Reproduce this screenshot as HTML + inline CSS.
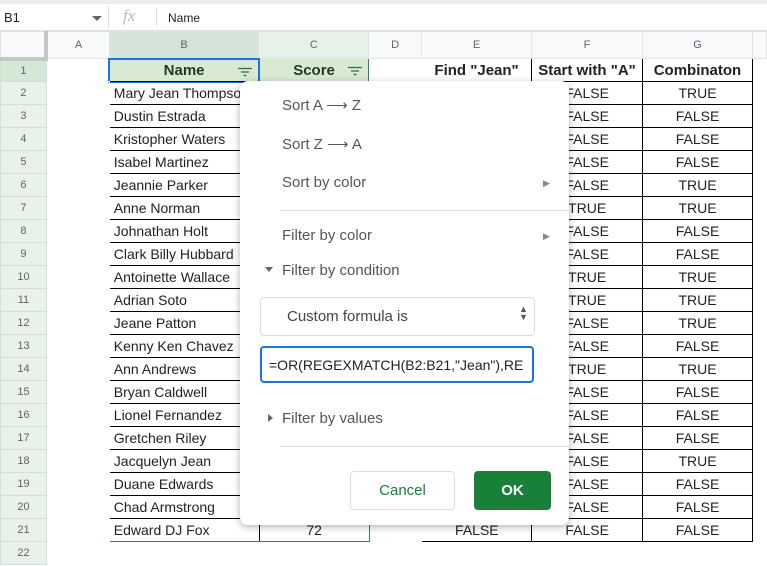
<!DOCTYPE html>
<html><head><meta charset="utf-8">
<style>
*{box-sizing:border-box;margin:0;padding:0}
body{width:767px;height:566px;overflow:hidden;background:#fff;font-family:"Liberation Sans",Arial,sans-serif;position:relative}
.top{position:absolute;left:0;top:0;width:767px;height:31px;background:#fff;border-top:4px solid #eee;border-bottom:1px solid #e0e0e0}
table{position:absolute;left:0;top:31px;border-collapse:collapse;table-layout:fixed}
td{height:23px;padding:0 4px;font-size:14px;color:#222;border:1px solid #e2e3e3;white-space:nowrap;overflow:hidden}
tr.h td{height:27px;background:#f8f9fa;color:#5f6368;text-align:center;font-size:11px}
td.rh{background:#e8f2ea;color:#5f6368;text-align:center;font-size:11px;border-color:#d6dcd7}
td.a{border-color:#fff}
.d{border:1px solid #000}
.c{text-align:center}
.b{font-weight:bold;text-align:center;font-size:15px}
.fi{position:absolute;right:5px;top:7px}
.menu{position:absolute;left:240px;top:81px;width:329px;height:444px;background:#fff;border-radius:8px;box-shadow:0 2px 8px rgba(0,0,0,.3);font-size:15px;color:#555}
.menu div{position:absolute}
.sep{height:1px;background:#e0e0e0}
.arr{font-size:9px;color:#888}
</style></head><body>
<div class="top">
<div style="position:absolute;left:4px;top:6px;font-size:13px;color:#222">B1</div>
<div style="position:absolute;left:92px;top:12px;width:0;height:0;border-left:5px solid transparent;border-right:5px solid transparent;border-top:5px solid #666"></div>
<div style="position:absolute;left:108px;top:2px;width:1px;height:22px;background:#ddd"></div>
<div style="position:absolute;left:123px;top:2px;font-style:italic;font-family:'Liberation Serif',serif;font-size:17px;color:#bbb">fx</div>
<div style="position:absolute;left:156px;top:4px;width:1px;height:18px;background:#ddd"></div>
<div style="position:absolute;left:168px;top:7px;font-size:12px;color:#222">Name</div>
</div>
<table>
<colgroup><col style="width:46px"><col style="width:63px"><col style="width:150px"><col style="width:110px"><col style="width:53px"><col style="width:110px"><col style="width:111px"><col style="width:110px"><col style="width:14px"></colgroup>
<tr class="h"><td style="border-right:4px solid #c4c7c5;border-bottom:4px solid #c4c7c5"></td><td>A</td><td style="background:#d3e3d8">B</td><td style="background:#e6f1e8">C</td><td>D</td><td>E</td><td>F</td><td>G</td><td></td></tr>
<tr><td class="rh" style="background:#d3e8d5">1</td><td class="a"></td><td class="b" style="background:#d9ead3;border:2px solid #1a73e8;position:relative;color:#1f3b1f">Name<svg class="fi" width="16" height="10" viewBox="0 0 16 10"><path d="M1 1.5H15M4 5H12M6.5 8.5H9.5" stroke="#2f6f3a" stroke-width="1.3"/></svg></td><td class="b" style="background:#d9ead3;border:1px solid #2e8b57;border-bottom:1px solid #000;position:relative;color:#1f3b1f">Score<svg class="fi" width="16" height="10" viewBox="0 0 16 10"><path d="M1 1.5H15M4 5H12M6.5 8.5H9.5" stroke="#2f6f3a" stroke-width="1.3"/></svg></td><td class="a"></td><td class="d b">Find "Jean"</td><td class="d b">Start with "A"</td><td class="d b">Combinaton</td><td class="a"></td></tr>
</table>
<table style="top:81px">
<colgroup><col style="width:46px"><col style="width:63px"><col style="width:150px"><col style="width:110px"><col style="width:53px"><col style="width:110px"><col style="width:111px"><col style="width:110px"><col style="width:14px"></colgroup>
<tr><td class="rh">2</td><td class="a"></td><td class="d" style="border-left:1px solid #2e8b57">Mary Jean Thompson</td><td class="d" style="border-right:1px solid #2e8b57"></td><td class="a"></td><td class="d c">FALSE</td><td class="d c">FALSE</td><td class="d c">TRUE</td><td class="a"></td></tr>
<tr><td class="rh">3</td><td class="a"></td><td class="d" style="border-left:1px solid #2e8b57">Dustin Estrada</td><td class="d" style="border-right:1px solid #2e8b57"></td><td class="a"></td><td class="d c">FALSE</td><td class="d c">FALSE</td><td class="d c">FALSE</td><td class="a"></td></tr>
<tr><td class="rh">4</td><td class="a"></td><td class="d" style="border-left:1px solid #2e8b57">Kristopher Waters</td><td class="d" style="border-right:1px solid #2e8b57"></td><td class="a"></td><td class="d c">FALSE</td><td class="d c">FALSE</td><td class="d c">FALSE</td><td class="a"></td></tr>
<tr><td class="rh">5</td><td class="a"></td><td class="d" style="border-left:1px solid #2e8b57">Isabel Martinez</td><td class="d" style="border-right:1px solid #2e8b57"></td><td class="a"></td><td class="d c">FALSE</td><td class="d c">FALSE</td><td class="d c">FALSE</td><td class="a"></td></tr>
<tr><td class="rh">6</td><td class="a"></td><td class="d" style="border-left:1px solid #2e8b57">Jeannie Parker</td><td class="d" style="border-right:1px solid #2e8b57"></td><td class="a"></td><td class="d c">FALSE</td><td class="d c">FALSE</td><td class="d c">TRUE</td><td class="a"></td></tr>
<tr><td class="rh">7</td><td class="a"></td><td class="d" style="border-left:1px solid #2e8b57">Anne Norman</td><td class="d" style="border-right:1px solid #2e8b57"></td><td class="a"></td><td class="d c">FALSE</td><td class="d c">TRUE</td><td class="d c">TRUE</td><td class="a"></td></tr>
<tr><td class="rh">8</td><td class="a"></td><td class="d" style="border-left:1px solid #2e8b57">Johnathan Holt</td><td class="d" style="border-right:1px solid #2e8b57"></td><td class="a"></td><td class="d c">FALSE</td><td class="d c">FALSE</td><td class="d c">FALSE</td><td class="a"></td></tr>
<tr><td class="rh">9</td><td class="a"></td><td class="d" style="border-left:1px solid #2e8b57">Clark Billy Hubbard</td><td class="d" style="border-right:1px solid #2e8b57"></td><td class="a"></td><td class="d c">FALSE</td><td class="d c">FALSE</td><td class="d c">FALSE</td><td class="a"></td></tr>
<tr><td class="rh">10</td><td class="a"></td><td class="d" style="border-left:1px solid #2e8b57">Antoinette Wallace</td><td class="d" style="border-right:1px solid #2e8b57"></td><td class="a"></td><td class="d c">FALSE</td><td class="d c">TRUE</td><td class="d c">TRUE</td><td class="a"></td></tr>
<tr><td class="rh">11</td><td class="a"></td><td class="d" style="border-left:1px solid #2e8b57">Adrian Soto</td><td class="d" style="border-right:1px solid #2e8b57"></td><td class="a"></td><td class="d c">FALSE</td><td class="d c">TRUE</td><td class="d c">TRUE</td><td class="a"></td></tr>
<tr><td class="rh">12</td><td class="a"></td><td class="d" style="border-left:1px solid #2e8b57">Jeane Patton</td><td class="d" style="border-right:1px solid #2e8b57"></td><td class="a"></td><td class="d c">FALSE</td><td class="d c">FALSE</td><td class="d c">TRUE</td><td class="a"></td></tr>
<tr><td class="rh">13</td><td class="a"></td><td class="d" style="border-left:1px solid #2e8b57">Kenny Ken Chavez</td><td class="d" style="border-right:1px solid #2e8b57"></td><td class="a"></td><td class="d c">FALSE</td><td class="d c">FALSE</td><td class="d c">FALSE</td><td class="a"></td></tr>
<tr><td class="rh">14</td><td class="a"></td><td class="d" style="border-left:1px solid #2e8b57">Ann Andrews</td><td class="d" style="border-right:1px solid #2e8b57"></td><td class="a"></td><td class="d c">FALSE</td><td class="d c">TRUE</td><td class="d c">TRUE</td><td class="a"></td></tr>
<tr><td class="rh">15</td><td class="a"></td><td class="d" style="border-left:1px solid #2e8b57">Bryan Caldwell</td><td class="d" style="border-right:1px solid #2e8b57"></td><td class="a"></td><td class="d c">FALSE</td><td class="d c">FALSE</td><td class="d c">FALSE</td><td class="a"></td></tr>
<tr><td class="rh">16</td><td class="a"></td><td class="d" style="border-left:1px solid #2e8b57">Lionel Fernandez</td><td class="d" style="border-right:1px solid #2e8b57"></td><td class="a"></td><td class="d c">FALSE</td><td class="d c">FALSE</td><td class="d c">FALSE</td><td class="a"></td></tr>
<tr><td class="rh">17</td><td class="a"></td><td class="d" style="border-left:1px solid #2e8b57">Gretchen Riley</td><td class="d" style="border-right:1px solid #2e8b57"></td><td class="a"></td><td class="d c">FALSE</td><td class="d c">FALSE</td><td class="d c">FALSE</td><td class="a"></td></tr>
<tr><td class="rh">18</td><td class="a"></td><td class="d" style="border-left:1px solid #2e8b57">Jacquelyn Jean</td><td class="d" style="border-right:1px solid #2e8b57"></td><td class="a"></td><td class="d c">FALSE</td><td class="d c">FALSE</td><td class="d c">TRUE</td><td class="a"></td></tr>
<tr><td class="rh">19</td><td class="a"></td><td class="d" style="border-left:1px solid #2e8b57">Duane Edwards</td><td class="d" style="border-right:1px solid #2e8b57"></td><td class="a"></td><td class="d c">FALSE</td><td class="d c">FALSE</td><td class="d c">FALSE</td><td class="a"></td></tr>
<tr><td class="rh">20</td><td class="a"></td><td class="d" style="border-left:1px solid #2e8b57">Chad Armstrong</td><td class="d" style="border-right:1px solid #2e8b57"></td><td class="a"></td><td class="d c">FALSE</td><td class="d c">FALSE</td><td class="d c">FALSE</td><td class="a"></td></tr>
<tr><td class="rh">21</td><td class="a"></td><td class="d" style="border-left:1px solid #2e8b57;border-bottom:1px solid #2e8b57">Edward DJ Fox</td><td class="d c" style="border-right:1px solid #2e8b57;border-bottom:1px solid #2e8b57">72</td><td class="a"></td><td class="d c">FALSE</td><td class="d c">FALSE</td><td class="d c">FALSE</td><td class="a"></td></tr>
<tr><td class="rh">22</td><td class="a"></td><td class="a"></td><td class="a"></td><td class="a"></td><td class="a"></td><td class="a"></td><td class="a"></td><td class="a"></td></tr>
</table>
<div class="menu">
<div style="left:42px;top:15px">Sort A ⟶ Z</div>
<div style="left:42px;top:54px">Sort Z ⟶ A</div>
<div style="left:42px;top:93px">Sort by color</div>
<div class="arr" style="left:303px;top:97px">&#9654;</div>
<div class="sep" style="left:40px;top:129px;width:289px"></div>
<div style="left:42px;top:146px">Filter by color</div>
<div class="arr" style="left:303px;top:150px">&#9654;</div>
<div style="left:25px;top:186px;width:0;height:0;border-left:4px solid transparent;border-right:4px solid transparent;border-top:5px solid #666"></div>
<div style="left:42px;top:181px">Filter by condition</div>
<div style="left:20px;top:216px;width:275px;height:39px;border:1px solid #ddd;border-radius:4px"></div>
<div style="left:47px;top:227px;color:#444">Custom formula is</div>
<div style="left:279px;top:224px;font-size:9px;color:#555;line-height:8px">&#9650;<br>&#9660;</div>
<div style="left:20px;top:265px;width:274px;height:37px;border:2px solid #1a73e8;border-radius:4px"></div>
<div style="left:29px;top:276px;color:#222;font-size:14px;width:260px;overflow:hidden;white-space:nowrap">=OR(REGEXMATCH(B2:B21,"Jean"),RE</div>
<div style="left:28px;top:333px;width:0;height:0;border-top:4px solid transparent;border-bottom:4px solid transparent;border-left:5px solid #666"></div>
<div style="left:42px;top:329px">Filter by values</div>
<div class="sep" style="left:40px;top:365px;width:289px"></div>
<div style="left:110px;top:390px;width:105px;height:39px;border:1px solid #ddd;border-radius:4px;color:#188038;text-align:center;line-height:37px">Cancel</div>
<div style="left:234px;top:390px;width:77px;height:39px;background:#188038;border-radius:4px;color:#fff;font-weight:bold;text-align:center;line-height:39px">OK</div>
</div>
</body></html>
